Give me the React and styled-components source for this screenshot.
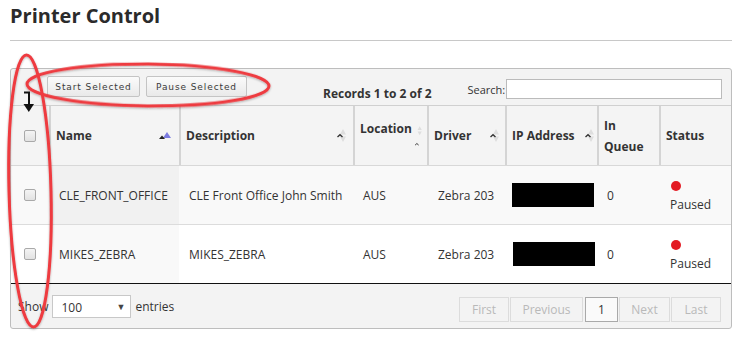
import React from 'react';
import styled, { createGlobalStyle } from 'styled-components';

const GlobalStyle = createGlobalStyle`
  body {
    margin: 0;
    background: #fff;
    font-family: 'Open Sans', 'Liberation Sans', sans-serif;
    font-size: 12px;
    color: #333;
  }
`;

const Page = styled.div`
  position: relative;
  width: 742px;
  height: 337px;
  padding: 0 10px;
  box-sizing: border-box;
  overflow: hidden;
`;

const Title = styled.h2`
  margin: 0;
  padding-top: 2px;
  font-size: 20px;
  line-height: 28px;
  font-weight: 700;
  color: #2b2b2b;
  padding-bottom: 10px;
  border-bottom: 1px solid #c8c8c8;
  width: 722px;
`;

const Box = styled.div`
  margin-top: 27px;
  width: 722px;
  border: 1px solid #bdbdbd;
  border-radius: 3px;
  background: #f3f3f3;
  box-sizing: border-box;
`;

const Toolbar = styled.div`
  height: 37px;
  display: flex;
  align-items: flex-start;
  padding-left: 36px;
  padding-top: 7px;
  box-sizing: border-box;
  border-bottom: 1px solid #d0d0d0;
`;

const ActionButton = styled.button`
  height: 21px;
  width: ${(p) => p.w}px;
  margin-right: 6px;
  padding: 0;
  border: 1px solid #c4c4c4;
  border-radius: 2px;
  background: linear-gradient(#fbfbfb, #e9e9e9);
  font-family: 'DejaVu Sans', Verdana, sans-serif;
  font-size: 9px;
  letter-spacing: 0.9px;
  color: #3a3a3a;
`;

const Records = styled.div`
  margin-left: 70px;
  margin-top: 9px;
  font-weight: 700;
  font-size: 12px;
  color: #333;
`;

const SearchLabel = styled.label`
  margin-left: 36px;
  margin-top: 3px;
  display: flex;
  align-items: center;
  font-size: 11px;
  color: #333;
`;

const SearchInput = styled.input`
  width: 216px;
  height: 20px;
  margin-left: 1px;
  border: 1px solid #bbb;
  box-sizing: border-box;
  background: #fff;
`;

const cols = '38px 130px 174px 74px 78px 92px 62px 72px';

const HeadRow = styled.div`
  display: grid;
  grid-template-columns: ${cols};
  height: 59px;
  border-bottom: 1px solid #d8d8d8;
  background: #f4f4f4;
`;

const HeadCell = styled.div`
  display: flex;
  align-items: center;
  justify-content: ${(p) => (p.center ? 'center' : 'space-between')};
  padding: 0 ${(p) => p.pr ?? 5}px 0 5px;
  border-left: ${(p) => (p.first ? 'none' : '2px solid #d4d4d4')};
  font-weight: 700;
  font-size: 12px;
  line-height: 21px;
  white-space: nowrap;
  color: #333;
  box-sizing: border-box;
`;

const RaisedText = styled.span`
  align-self: center;
  margin-top: -15px;
`;

const Row = styled.div`
  display: grid;
  grid-template-columns: ${cols};
  height: ${(p) => p.h}px;
  background: ${(p) => (p.odd ? '#f9f9f9' : '#fff')};
  border-bottom: ${(p) => (p.last ? '1px solid #111' : '1px solid #dcdcdc')};
`;

const Cell = styled.div`
  display: flex;
  align-items: center;
  justify-content: ${(p) => (p.center ? 'center' : 'flex-start')};
  padding-left: ${(p) => p.pl ?? 10}px;
  background: ${(p) => (p.sorted ? (p.odd ? '#f1f1f1' : '#f9f9f9') : 'transparent')};
  font-size: 12px;
  color: #333;
  box-sizing: border-box;
`;

const Check = styled.span`
  width: 10px;
  height: 10px;
  border: 1px solid #a9a9a9;
  border-radius: 2px;
  background: linear-gradient(#f4f4f4, #e2e2e2);
`;

const Redacted = styled.div`
  width: 82px;
  height: 24px;
  background: #000;
  margin-left: ${(p) => p.ml}px;
`;

const StatusBox = styled.div`
  display: flex;
  flex-direction: column;
  align-items: flex-start;
  padding-top: 4px;
`;

const Dot = styled.span`
  width: 10px;
  height: 10px;
  border-radius: 50%;
  background: #e31b23;
  margin-left: 1px;
  margin-bottom: 5px;
`;

const Footer = styled.div`
  height: 44px;
  display: flex;
  align-items: flex-start;
  padding: 0 10px 0 7px;
  box-sizing: border-box;
`;

const ShowLabel = styled.div`
  display: flex;
  align-items: center;
  margin-top: 11px;
  font-size: 12px;
  color: #333;
`;

const Select = styled.div`
  width: 79px;
  height: 23px;
  margin: 0 4px 0 4px;
  border: 1px solid #c8c8c8;
  background: #fff;
  box-sizing: border-box;
  display: flex;
  align-items: center;
  justify-content: space-between;
  padding: 2px 5px 0 8px;
  font-size: 12px;
  color: #333;
`;

const Caret = styled.span`
  font-size: 9px;
  color: #444;
  margin-top: -2px;
`;

const Pager = styled.div`
  margin-left: auto;
  margin-top: 13px;
  display: flex;
  gap: 1px;
`;

const PageButton = styled.div`
  width: ${(p) => p.w}px;
  height: 25px;
  box-sizing: border-box;
  border: 1px solid ${(p) => (p.active ? '#a9a9a9' : '#dcdcdc')};
  display: flex;
  align-items: center;
  justify-content: center;
  font-size: 12px;
  color: ${(p) => (p.active ? '#333' : '#b9b9b9')};
  background: ${(p) => (p.active ? '#fafafa' : '#f3f3f3')};
  margin-left: ${(p) => p.ml || 0}px;
`;

const Overlay = styled.svg`
  position: absolute;
  left: 0;
  top: 0;
  pointer-events: none;
`;

const SortIcon = ({ active }) => (
  <svg width="16" height="16" viewBox="0 0 16 16">
    {active ? (
      <>
        <path d="M10 4 L14 10 L6 10 Z" fill="#7c7ce0" />
        <path d="M5 7.5 L8 11 L2 11 Z" fill="#222" />
      </>
    ) : (
      <>
        <path d="M11 1 L14 6.5 L8 6.5 Z M8 8.5 L14 8.5 L11 14 Z" fill="#dedede" />
        <path d="M5.5 9 L8 6.8 L10.5 9" fill="none" stroke="#333" strokeWidth="1.4" />
      </>
    )}
  </svg>
);

const DropSort = () => (
  <svg width="16" height="34" viewBox="0 0 16 34">
    <path d="M11 3 L14 8.5 L8 8.5 Z M8 10.5 L14 10.5 L11 16 Z" fill="#dedede" />
    <path d="M4.5 30 L7 27.8 L9.5 30" fill="none" stroke="#333" strokeWidth="1.4" />
  </svg>
);

const rows = [
  { name: 'CLE_FRONT_OFFICE', desc: 'CLE Front Office John Smith', loc: 'AUS', driver: 'Zebra 203', ml: 2 },
  { name: 'MIKES_ZEBRA', desc: 'MIKES_ZEBRA', loc: 'AUS', driver: 'Zebra 203', ml: 3 },
];

const App = () => (
  <Page>
    <GlobalStyle />
    <Title>Printer Control</Title>
    <Box>
      <Toolbar>
        <ActionButton w={93}>Start Selected</ActionButton>
        <ActionButton w={101}>Pause Selected</ActionButton>
        <Records>Records 1 to 2 of 2</Records>
        <SearchLabel>
          Search:
          <SearchInput />
        </SearchLabel>
      </Toolbar>
      <HeadRow>
        <HeadCell first center>
          <Check />
        </HeadCell>
        <HeadCell pr={6}>
          Name
          <SortIcon active />
        </HeadCell>
        <HeadCell pr={5}>
          Description
          <SortIcon />
        </HeadCell>
        <HeadCell pr={4}>
          <RaisedText>Location</RaisedText>
          <DropSort />
        </HeadCell>
        <HeadCell pr={4}>
          Driver
          <SortIcon />
        </HeadCell>
        <HeadCell pr={1}>
          IP Address
          <SortIcon />
        </HeadCell>
        <HeadCell>
          <span>
            In
            <br />
            Queue
          </span>
        </HeadCell>
        <HeadCell>Status</HeadCell>
      </HeadRow>
      {rows.map((r, i) => (
        <Row key={r.name} odd={i === 0} last={i === rows.length - 1} h={58}>
          <Cell center pl={0}>
            <Check />
          </Cell>
          <Cell sorted odd={i === 0}>{r.name}</Cell>
          <Cell>{r.desc}</Cell>
          <Cell>{r.loc}</Cell>
          <Cell pl={11}>{r.driver}</Cell>
          <Cell pl={5}>
            <Redacted ml={r.ml} />
          </Cell>
          <Cell>0</Cell>
          <Cell pl={11}>
            <StatusBox>
              <Dot />
              Paused
            </StatusBox>
          </Cell>
        </Row>
      ))}
      <Footer>
        <ShowLabel>
          Show
          <Select>
            100
            <Caret>▼</Caret>
          </Select>
          entries
        </ShowLabel>
        <Pager>
          <PageButton w={50}>First</PageButton>
          <PageButton w={73}>Previous</PageButton>
          <PageButton w={33} active ml={1}>
            1
          </PageButton>
          <PageButton w={51}>Next</PageButton>
          <PageButton w={50}>Last</PageButton>
        </Pager>
      </Footer>
    </Box>
    <Overlay width="742" height="337" viewBox="0 0 742 337">
      <defs>
        <filter id="sh" x="-20%" y="-20%" width="140%" height="140%">
          <feDropShadow dx="0" dy="1" stdDeviation="1.2" floodColor="#000" floodOpacity="0.3" />
        </filter>
      </defs>
      <g filter="url(#sh)" fill="none" stroke="#ee3a3f" strokeWidth="3">
        <ellipse cx="30" cy="191" rx="21" ry="136" transform="rotate(-1.5 30 191)" />
        <ellipse cx="148" cy="85" rx="121" ry="21" transform="rotate(0.5 148 85)" />
      </g>
      <g>
        <path d="M24 92.5 H29 V105" fill="none" stroke="#111" strokeWidth="2" />
        <path d="M23.5 104 H34 L28.8 112 Z" fill="#111" />
      </g>
    </Overlay>
  </Page>
);

export default App;
